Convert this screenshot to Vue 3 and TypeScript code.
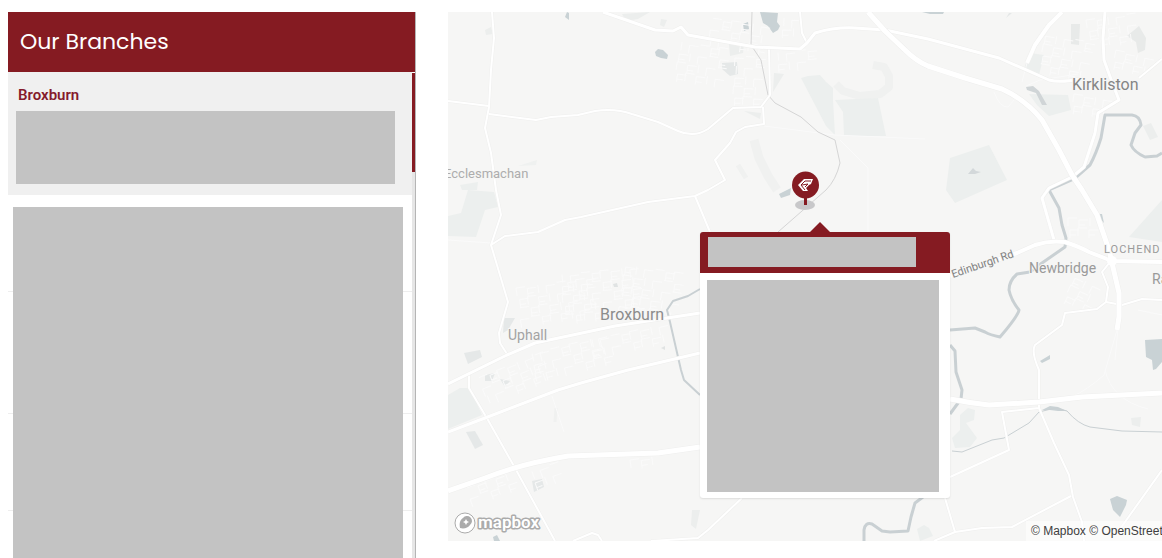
<script setup lang="ts">
interface Line { d: string; w: number }
interface Shape { points: string; fill: string }
interface Cluster { x: number; y: number; cols: number; rows: number; angle: number }
interface Place { name: string; x: number; y: number; size: number; fill: string; rotate?: number }

const green = '#ecefee'
const grey = '#e5e8e8'
const water = '#c9d2d5'

const shapes: Shape[] = [
  { points: '801,78 808,76 820,75 826,82 833,88 833,100 835,135 826,126', fill: green },
  { points: '835,100 878,98 886,136 844,136 843,112', fill: green },
  { points: '950,158 989,145 1007,180 955,203 946,190', fill: green },
  { points: '468,190 494,192 498,207 485,210 476,237 448,236 448,216 461,213', fill: green },
  { points: '448,395 460,388 470,388 482,415 448,429', fill: green },
  { points: '466,432 475,431 483,445 475,449', fill: grey },
  { points: '729,44 744,44 743,53 730,56', fill: '#eceeed' },
  { points: '722,63 737,62 738,74 730,76 722,69', fill: grey },
  { points: '774,73 784,74 773,92', fill: '#eceeed' },
  { points: '744,111 761,113 760,119', fill: '#eceeed' },
  { points: '1071,24 1080,24 1079,45 1071,44', fill: '#e8eae9' },
  { points: '1127,36 1139,26 1146,38 1145,50 1138,53 1136,42', fill: '#e8eae9' },
  { points: '1030,53 1044,55 1039,75 1024,68', fill: green },
  { points: '1029,94 1068,95 1071,110 1049,116 1037,105', fill: green },
  { points: '1143,126 1151,123 1158,137 1150,140', fill: '#eceeed' },
  { points: '1162,200 1129,237 1162,242', fill: green },
  { points: '952,438 960,430 960,415 968,408 975,410 974,420 966,423 977,438 970,447 955,448', fill: green },
  { points: '504,318 515,318 508,330 503,333', fill: grey },
  { points: '485,375 495,373 492,381 485,381', fill: grey },
  { points: '500,379 510,381 505,387', fill: grey },
  { points: '532,481 542,479 544,487 534,492', fill: grey },
  { points: '464,353 480,350 482,357 468,364', fill: grey },
  { points: '622,14 650,12 638,19 626,21', fill: '#eceeed' },
  { points: '661,19 667,20 664,27 660,25', fill: '#eceeed' },
  { points: '485,30 491,27 493,34 486,35', fill: '#eceeed' },
  { points: '518,166 537,160 536,165', fill: '#eff1f0' },
  { points: '460,185 478,182 477,190 462,190', fill: green },
  { points: '692,510 700,510 696,529 691,525', fill: '#eceeed' },
  { points: '1131,418 1141,417 1140,427 1132,425', fill: '#eceeed' },
  { points: '1009,13 1012,13 1006,18', fill: grey },
  { points: '917,529 924,525 929,528 933,536 920,541', fill: green },
  { points: '760,12 778,13 777,22 780,26 778,30 773,33 768,26 763,23', fill: water },
  { points: '743,24 748,22 749,29 744,31', fill: water },
  { points: '655,52 658,49 663,50 668,55 667,59 661,58 656,56', fill: water },
  { points: '565,17 567,12 569,13 569,20', fill: water },
  { points: '922,12 944,12 943,14 930,14', fill: water },
  { points: '1026,87 1033,86 1039,91 1047,105 1042,105 1036,93 1027,90', fill: '#d0d5d7' },
  { points: '968,174 973,168 976,171 981,172 975,174', fill: '#d3d8da' },
  { points: '1099,214 1102,214 1104,223 1101,220', fill: water },
  { points: '1040,361 1050,355 1050,359 1042,363', fill: water },
  { points: '1145,340 1162,339 1162,362 1156,369 1153,370 1152,360 1146,357', fill: water },
  { points: '1110,499 1117,496 1127,500 1126,505 1120,517 1113,510', fill: water },
  { points: '1042,410 1050,406 1058,407 1067,411 1058,411 1050,410', fill: water },
  { points: '493,537 497,535 500,541 494,541', fill: water },
  { points: '779,194 791,188 790,195 781,198', fill: water },
  { points: '613,284 617,283 618,287 614,287', fill: '#e0e3e3' },
  { points: '661,348 665,346 665,350', fill: '#e0e3e3' },
]

const hills: Line[] = [
  { d: 'M873 65 L884 67 L889 76 L889 87 L880 94 L860 96 L843 91 L836 84', w: 8 },
  { d: 'M754 140 L759 158 L768 176 L777 190', w: 9 },
  { d: 'M738 165 L746 178', w: 5 },
  { d: 'M556 408 L555 422', w: 3 },
]

const rivers: Line[] = [
  { d: 'M1162 153 L1157 156 L1145 157 Q1134 152 1131 145 L1135 133 L1141 125 Q1140 116 1132 115 L1105 115 L1101 138 Q1096 154 1090 165 L1074 179 L1049 190 L1059 208 L1062 225 L1066 238 L1065 247 L1042 263 L1030 272 L1017 274 Q1009 281 1009 290 Q1011 300 1019 310 Q1018 316 1000 337 Q990 335 985 332 L975 328 L950 330', w: 3 },
  { d: 'M950 345 L955 351 L956 372 L962 390 L961 399 L950 414', w: 3 },
  { d: 'M923 497 L915 503 L911 517 L908 531 L890 532 L882 531 L872 524 Q865 522 864 530 L864 541', w: 3 },
  { d: 'M700 289 L688 296 L673 301 L667 310 L670 322 L681 370 L684 380 L700 395', w: 2 },
  { d: 'M952 451 L962 452 L992 440 L1004 438 L1029 423 L1039 412 L1055 408 L1067 411 Q1078 424 1090 427 L1122 431 L1162 432', w: 1 },
]

const rails: string[] = [
  'M752 12 L751 45 L761 60 L768 95 L775 103 L801 117 L818 132 L835 140 L840 163 Q836 180 826 190 L778 232',
]

const minorRoads: Line[] = [
  { d: 'M492 12 L494 38 L491 70 L489 107 L485 128 L491 153 L496 190 L501 215 L491 245 L508 302 L499 333 L500 343 L507 354', w: 2 },
  { d: 'M448 101 L489 106 M489 114 L536 120 L551 117 L578 115 L595 111 Q615 108 632 114 L658 122 L678 131 Q694 138 708 129 L733 108 L761 107 L770 95 L769 48', w: 2 },
  { d: 'M800 12 L802 33 L807 43', w: 2 },
  { d: 'M491 245 L505 236 L538 232 L565 220 L581 217 L648 202 L695 196 L708 190 L725 180 L715 160 L730 143 L736 132 L745 127 L764 124 L763 107 M695 196 L710 232', w: 2 },
  { d: 'M1105 12 L1103 38 L1104 60 L1112 82 L1119 100 L1098 113 L1095 133 L1084 167 L1072 177 L1049 188 L1042 198 L1054 240', w: 3 },
  { d: 'M1139 78 L1162 59', w: 2 },
  { d: 'M1110 262 L1102 272 L1108 287 L1106 302 L1097 309 L1065 313 L1062 325 L1035 345 Q1031 352 1039 370 L1039 408 L1002 412 L1009 450 L950 477', w: 2 },
  { d: 'M1106 302 L1122 305 L1142 299 L1162 300', w: 2 },
  { d: 'M1039 408 L1054 443 L1069 475 L1073 497 L1082 522 L1084 541 M1071 496 L1012 527 L982 528 L955 532 L934 541 M945 498 L955 532 M1162 470 L1120 529', w: 2 },
  { d: 'M469 375 L469 388 L488 420 L515 468 L555 541', w: 2 },
  { d: 'M573 541 L592 533 L598 535 L602 541 M651 541 L698 538 L708 530 L742 498', w: 2 },
]

const majorRoads: Line[] = [
  { d: 'M603 12 L655 30 L673 31 L681 27 L688 35 L755 47 L800 49 L807 43 L815 33 Q835 27 855 28 L885 30 L928 39 L999 58 L1049 80 Q1060 83 1080 79', w: 3 },
  { d: 'M448 384 L507 355 L535 343 L615 326 L700 313', w: 3 },
  { d: 'M448 432 L485 418 L558 390 L581 383 L628 370 L700 353', w: 3 },
  { d: 'M1062 12 L1049 25 L1035 45 L1027 63', w: 4 },
  { d: 'M950 276 L1017 253 L1035 245 Q1050 240 1065 242 Q1080 247 1089 252 L1112 261 L1162 262', w: 4 },
]

const motorways: Line[] = [
  { d: 'M868 12 L885 31 L905 50 Q916 61 928 66 L965 78 L1002 89 Q1026 100 1042 120 L1059 150 L1072 175 L1082 190 L1097 215 L1109 250 L1119 293 L1119 317 L1117 330', w: 5 },
  { d: 'M448 491 L485 478 Q520 464 568 456 L658 453 L700 447', w: 5 },
  { d: 'M950 399 Q970 403 989 405 L1039 402 L1082 397 L1162 393', w: 5 },
]

const faintRoads = 'M1027 63 L1022 82 M1119 317 L1115 360 M1117 330 L1104 375 Q1070 405 1045 401 M1105 370 Q1112 400 1148 409 M994 92 Q1000 108 1008 107 Q1014 100 1016 98 M1026 86 L1040 80 L1078 74 M448 240 L491 243 M764 126 L835 135 L925 139 M840 140 L868 168 L868 232 M552 396 L564 432 M1138 310 L1162 315'

const clusters: Cluster[] = [
  { x: 712, y: 18, cols: 6, rows: 3, angle: 8 },
  { x: 680, y: 42, cols: 5, rows: 4, angle: 8 },
  { x: 735, y: 56, cols: 3, rows: 5, angle: 3 },
  { x: 776, y: 53, cols: 4, rows: 2, angle: -6 },
  { x: 782, y: 18, cols: 2, rows: 2, angle: 2 },
  { x: 1045, y: 34, cols: 5, rows: 4, angle: 10 },
  { x: 1086, y: 20, cols: 5, rows: 3, angle: -8 },
  { x: 1116, y: 50, cols: 4, rows: 2, angle: 12 },
  { x: 1074, y: 94, cols: 4, rows: 2, angle: 8 },
  { x: 516, y: 288, cols: 8, rows: 4, angle: -8 },
  { x: 560, y: 275, cols: 8, rows: 5, angle: -6 },
  { x: 625, y: 265, cols: 6, rows: 5, angle: 8 },
  { x: 530, y: 354, cols: 8, rows: 3, angle: -14 },
  { x: 590, y: 340, cols: 8, rows: 2, angle: -12 },
  { x: 478, y: 378, cols: 7, rows: 3, angle: -22 },
  { x: 630, y: 460, cols: 3, rows: 1, angle: -8 },
  { x: 530, y: 472, cols: 3, rows: 2, angle: -20 },
  { x: 466, y: 488, cols: 5, rows: 2, angle: -20 },
  { x: 1075, y: 276, cols: 3, rows: 3, angle: 25 },
  { x: 1068, y: 218, cols: 3, rows: 2, angle: 0 },
]

// Builds a loose street grid, leaving out some blocks so that it reads as a town.
function streets(c: Cluster): string {
  const step = 10
  let d = ''
  for (let r = 0; r < c.rows; r++) {
    for (let i = 0; i < c.cols; i++) {
      const k = (i * 7 + r * 5 + c.x) % 6
      const x = i * step + (k % 3)
      const y = r * step + (k % 2) * 2
      if (k !== 2) d += `M${x} ${y}h${step - 1}`
      if (k !== 4) d += `M${x} ${y}v${step - 2}`
      if (k === 1 || k === 5) d += `M${x} ${y + 5}h${step - 4}`
    }
  }
  return d
}

const places: Place[] = [
  { name: 'Kirkliston', x: 1072, y: 90, size: 16, fill: '#858585' },
  { name: 'Ecclesmachan', x: 444, y: 178, size: 13, fill: '#adadad' },
  { name: 'Broxburn', x: 600, y: 320, size: 16, fill: '#8c8c8c' },
  { name: 'Uphall', x: 508, y: 340, size: 14, fill: '#a3a3a3' },
  { name: 'Newbridge', x: 1029, y: 273, size: 14, fill: '#9a9a9a' },
  { name: 'Ra', x: 1152, y: 284, size: 14, fill: '#9a9a9a' },
  { name: 'Edinburgh Rd', x: 953, y: 278, size: 11, fill: '#808080', rotate: -19 },
]

const branches = [{ id: 'broxburn', name: 'Broxburn' }]
</script>

<template>
  <main class="locator">
    <aside class="sidebar">
      <header class="sidebar-head"><h1>Our Branches</h1></header>
      <div class="listing">
        <section v-for="b in branches" :key="b.id" class="branch active">
          <a class="branch-name" :href="'#' + b.id">{{ b.name }}</a>
          <div class="block branch-details"></div>
        </section>
        <div class="rest">
          <div class="rule first"></div>
          <div class="rule second"></div>
          <div class="rule third"></div>
          <div class="block cover"></div>
        </div>
        <div class="track"><div class="thumb"></div></div>
      </div>
    </aside>

    <section class="map" aria-label="Branch map">
      <svg class="canvas" viewBox="448 12 714 529" preserveAspectRatio="xMinYMin slice">
        <path v-for="(h, i) in hills" :key="'h' + i" :d="h.d" :stroke-width="h.w" class="hill" />
        <polygon v-for="(s, i) in shapes" :key="'s' + i" :points="s.points" :fill="s.fill" />
        <path
          v-for="(c, i) in clusters" :key="'c' + i" :d="streets(c)" class="street"
          :transform="`translate(${c.x} ${c.y}) rotate(${c.angle})`"
        />
        <path :d="faintRoads" class="street" />
        <path v-for="(r, i) in rivers" :key="'w' + i" :d="r.d" :stroke-width="r.w" class="river" />
        <path v-for="(d, i) in rails" :key="'r' + i" :d="d" class="rail" />
        <g v-for="(set, n) in [minorRoads, majorRoads, motorways]" :key="'g' + n">
          <path v-for="(r, i) in set" :key="'e' + i" :d="r.d" :stroke-width="r.w + 1" class="casing" />
          <path v-for="(r, i) in set" :key="'f' + i" :d="r.d" :stroke-width="r.w" class="road" />
        </g>
        <circle cx="1112" cy="261" r="5" fill="#ffffff" />
        <text
          v-for="p in places" :key="p.name" :x="p.x" :y="p.y" :font-size="p.size" :fill="p.fill"
          :transform="p.rotate ? `rotate(${p.rotate} ${p.x} ${p.y})` : undefined" class="place"
        >{{ p.name }}</text>
        <text x="1104" y="253" class="place district">LOCHEND</text>
      </svg>

      <button class="marker" type="button" aria-label="Broxburn">
        <svg width="30" height="40" viewBox="0 0 30 40">
          <ellipse cx="14" cy="34" rx="10" ry="5" fill="#c8c8ca" />
          <path d="M14.5 24V34" stroke="#851b22" stroke-width="3" />
          <circle cx="14.5" cy="14" r="13.5" fill="#851b22" />
          <path d="M22 8H13L7 14L12 20H17L15 17L18 14L20 13Z" fill="#ffffff" />
          <path d="M20 10H14L10 14L14 19M11 14L17 13L14 16" fill="none" stroke="#851b22" stroke-width="1" />
        </svg>
      </button>

      <article class="popup">
        <header class="popup-head"><div class="block"></div></header>
        <div class="popup-body"><div class="block"></div></div>
      </article>

      <a class="logo" href="#mapbox" aria-label="Mapbox">
        <svg width="90" height="24" viewBox="0 0 90 24">
          <circle cx="11" cy="12" r="10" fill="#ffffff" stroke="#ababab" stroke-width="1" />
          <path d="M6 17C5 12 6 9 9 7A5 5 0 1 1 16 14C14 17 10 18 6 17Z" fill="#ababab" />
          <path d="M12 8L13 10L15 11L13 12L12 14L11 12L9 11L11 10Z" fill="#ffffff" />
          <text x="24" y="17" class="wordmark">mapbox</text>
        </svg>
      </a>

      <footer class="credits">
        <a href="#mapbox">© Mapbox</a> <a href="#osm">© OpenStreet</a>
      </footer>
    </section>
  </main>
</template>

<style>
body {
  background: #ffffff;
  overflow: hidden;
}
</style>

<style scoped>
* {
  box-sizing: border-box;
}
.locator {
  display: flex;
  gap: 32px;
  height: 100vh;
  padding: 12px 0 0 8px;
  font-family: Roboto, "Liberation Sans", sans-serif;
}
.sidebar {
  flex: 0 0 408px;
  display: flex;
  flex-direction: column;
  border-right: 1px solid #b5b5b5;
}
.sidebar-head {
  display: flex;
  align-items: center;
  height: 60px;
  padding-left: 12px;
  background: #851b22;
}
h1 {
  margin: 0;
  color: #ffffff;
  font: 400 22px/32px Poppins, Inter, sans-serif;
}
.listing {
  position: relative;
  flex: 1;
  display: flex;
  flex-direction: column;
  padding-right: 3px;
  min-height: 0;
}
.branch {
  padding: 12px 17px 11px 8px;
  background: #f0f0f0;
}
.branch-name {
  display: block;
  padding: 0 2px;
  margin-bottom: 5px;
  color: #851b2c;
  font-size: 15px;
  line-height: 22px;
  font-weight: 600;
  text-decoration: none;
}
.block {
  background: #c3c3c3;
}
.branch-details {
  height: 73px;
}
.rest {
  position: relative;
  flex: 1;
  min-height: 0;
  overflow: hidden;
}
.rule {
  border-bottom: 1px solid #eeeeee;
}
.first {
  height: 97px;
}
.second {
  height: 122px;
}
.third {
  height: 97px;
}
.cover {
  position: absolute;
  inset: 12px 9px 0 5px;
}
.track {
  position: absolute;
  top: 1px;
  right: 0;
  bottom: 0;
  width: 3px;
  background: #e6e6e6;
}
.thumb {
  height: 99px;
  background: #851b22;
}
.map {
  position: relative;
  flex: 1;
  min-width: 0;
  margin-bottom: 17px;
  overflow: hidden;
  background: #f6f6f5;
}
.canvas {
  display: block;
  width: 100%;
  height: 100%;
}
.hill,
.street,
.river,
.rail,
.casing,
.road {
  fill: none;
  stroke-linejoin: round;
}
.hill {
  stroke: #f0f1f0;
}
.street {
  stroke: #fafafa;
  stroke-width: 1;
}
.river {
  stroke: #c9d0d3;
}
.rail {
  stroke: #d5d5d5;
  stroke-width: 1;
}
.casing {
  stroke: #efefee;
}
.road {
  stroke: #ffffff;
}
.place {
  font-family: Roboto, "Liberation Sans", sans-serif;
  paint-order: stroke;
  stroke: #f6f6f5;
  stroke-width: 2px;
}
.district {
  font-size: 11px;
  letter-spacing: 1px;
  fill: #9a9a9a;
}
.marker {
  position: absolute;
  left: 343px;
  top: 159px;
  padding: 0;
  border: 0;
  background: none;
  line-height: 0;
}
.popup {
  position: absolute;
  left: 252px;
  top: 220px;
  width: 250px;
  border-radius: 3px;
  background: #ffffff;
  box-shadow: 0 1px 2px rgba(0, 0, 0, 0.1);
}
.popup::before {
  content: "";
  position: absolute;
  left: 110px;
  top: -10px;
  border: 10px solid transparent;
  border-top: 0;
  border-bottom-color: #851b22;
}
.popup-head {
  padding: 5px 34px 6px 8px;
  border-radius: 3px 3px 0 0;
  background: #851b22;
}
.popup-head .block {
  height: 30px;
}
.popup-body {
  padding: 7px 11px 6px 7px;
}
.popup-body .block {
  height: 212px;
}
.logo {
  position: absolute;
  left: 6px;
  bottom: 6px;
  line-height: 0;
}
.wordmark {
  font: 600 17px Roboto, sans-serif;
  fill: #ffffff;
  stroke: #ababab;
  stroke-width: 3px;
  stroke-linejoin: round;
  paint-order: stroke;
}
.credits {
  position: absolute;
  right: 0;
  bottom: 0;
  width: 136px;
  padding-left: 5px;
  overflow: hidden;
  white-space: nowrap;
  background: rgba(255, 255, 255, 0.5);
  font: 12px/20px "Liberation Sans", Arial, sans-serif;
}
.credits a {
  color: #404040;
  text-decoration: none;
}
</style>
